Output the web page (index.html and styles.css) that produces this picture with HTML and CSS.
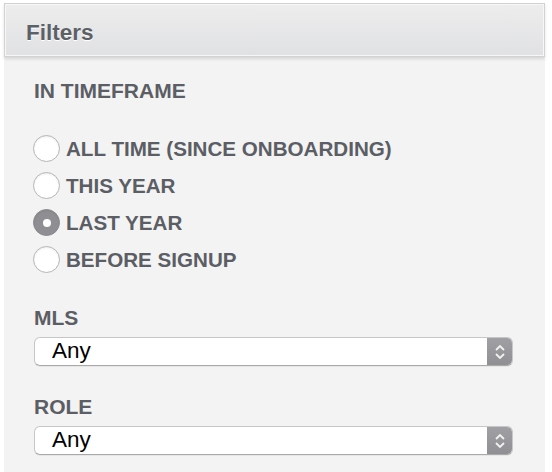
FILE: index.html
```html
<!DOCTYPE html>
<html>
	<head>
		<meta charset="UTF-8">
		<title>Filters</title>
		<link rel="stylesheet" href="styles.css">
	</head>
	<body>
		<div class="panel">
			<div class="panel-header">Filters</div>

			<div class="panel-body">
				<div class="filter-label">In timeframe</div>

				<div class="radio-list">
					<label class="radio-row"><span class="radio"></span>All time (since onboarding)</label>
					<label class="radio-row"><span class="radio"></span>This year</label>
					<label class="radio-row"><span class="radio checked"></span>Last year</label>
					<label class="radio-row"><span class="radio"></span>Before signup</label>
				</div>

				<div class="filter-label">MLS</div>
				<div class="select">
					<span class="select-value">Any</span>
					<span class="select-arrows">
						<svg width="12" height="18" viewBox="0 0 12 18"><path d="M2 7 L6 3 L10 7 M2 11 L6 15 L10 11" fill="none" stroke="#f2f2f2" stroke-width="1.8"/></svg>
					</span>
				</div>

				<div class="filter-label">Role</div>
				<div class="select">
					<span class="select-value">Any</span>
					<span class="select-arrows">
						<svg width="12" height="18" viewBox="0 0 12 18"><path d="M2 7 L6 3 L10 7 M2 11 L6 15 L10 11" fill="none" stroke="#f2f2f2" stroke-width="1.8"/></svg>
					</span>
				</div>
			</div>
		</div>
	</body>
</html>
```

FILE: styles.css
```css
* {
	box-sizing: border-box;
	margin: 0;
	padding: 0;
}
body, html {
	height: 100%;
	background: #fff;
	font-family: 'Liberation Sans', Arial, sans-serif;
}
.panel {
	margin: 3px 7px 0 4px;
	height: 100%;
	background: #f3f3f3;
}
.panel-header {
	height: 54px;
	padding: 6px 0 0 21px;
	line-height: 46px;
	font-size: 22.5px;
	font-weight: bold;
	color: #5c6067;
	text-shadow: 0 1px 0 #fff;
	background: linear-gradient(#ededed, #e0e1e3);
	border: 1px solid #d2d2d2;
	box-shadow: inset 0 0 0 1px #f7f7f7, 0 2px 3px rgba(0, 0, 0, 0.12);
}
.panel-body {
	padding: 22px 32px 0 30px;
}
.filter-label {
	font-size: 21px;
	line-height: 24px;
	font-weight: bold;
	text-transform: uppercase;
	color: #5b5e64;
}
.radio-list {
	margin: 27px 0 28px;
}
.radio-row {
	display: flex;
	align-items: center;
	gap: 6px;
	height: 37px;
	font-size: 20.6px;
	font-weight: bold;
	text-transform: uppercase;
	color: #5b5e64;
}
.radio {
	width: 27px;
	height: 27px;
	margin-left: -1px;
	border-radius: 50%;
	background: #fff;
	border: 1px solid #b5b5b5;
	box-shadow: inset 0 1px 2px rgba(0, 0, 0, 0.08);
	position: relative;
}
.radio.checked {
	background: #8f8f93;
	border-color: #8a8a8e;
}
.radio.checked::after {
	content: "";
	position: absolute;
	left: 9px;
	top: 9px;
	width: 8px;
	height: 8px;
	border-radius: 50%;
	background: #fff;
}
.select {
	display: flex;
	height: 29px;
	margin: 7px 0 29px;
	background: #fff;
	border: 1px solid #c6c6c6;
	border-bottom-color: #a9a9a9;
	border-radius: 6px;
	overflow: hidden;
	box-shadow: 0 1px 0 rgba(0, 0, 0, 0.05);
}
.select-value {
	flex: 1;
	padding-left: 17px;
	font-size: 22.5px;
	line-height: 26px;
	color: #000;
}
.select-arrows {
	width: 25px;
	display: flex;
	align-items: center;
	justify-content: center;
	background: linear-gradient(#a0a0a4, #909094);
}
```
